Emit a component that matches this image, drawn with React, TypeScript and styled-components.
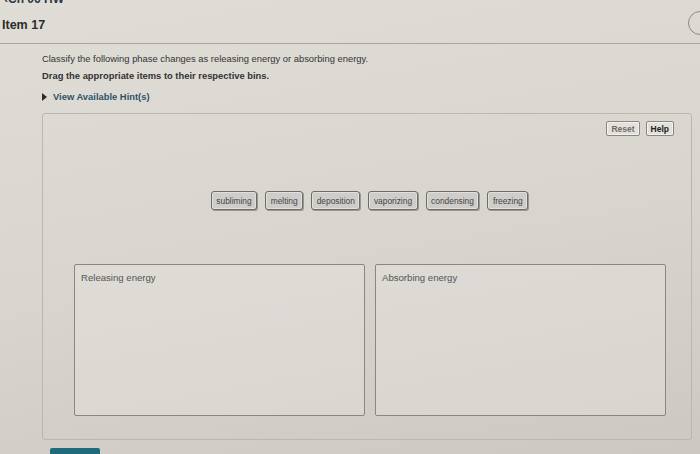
import styled, { createGlobalStyle } from 'styled-components'

const GlobalStyle = createGlobalStyle`
  html, body {
    margin: 0;
    padding: 0;
  }
  body {
    width: 700px;
    height: 454px;
    overflow: hidden;
    font-family: "Liberation Sans", Arial, sans-serif;
    background: linear-gradient(170deg, #e0ddd7 0%, #d8d4ce 55%, #cdc9c2 100%);
    color: #333;
  }
`

const Crumb = styled.div`
  height: 6px;
  overflow: hidden;
  padding-left: 4px;
`

const CrumbText = styled.span`
  display: block;
  transform: translateY(-8px);
  font-size: 12px;
  font-weight: 700;
  color: #2f3a44;
`

const ItemHeader = styled.div`
  display: flex;
  justify-content: space-between;
  align-items: center;
  height: 37px;
  padding-left: 2px;
  border-bottom: 1px solid #aaa69f;
  overflow: hidden;
`

const ItemTitle = styled.h1`
  margin: 0;
  font-size: 12.5px;
  font-weight: 700;
  color: #2c2c2c;
`

const RoundButton = styled.div`
  width: 22px;
  height: 22px;
  border-radius: 50%;
  border: 1px solid #8d8a85;
  margin-right: -12px;
  margin-top: -4px;
`

const Content = styled.div`
  padding: 9px 8px 0 42px;
`

const Line = styled.p<{ $bold?: boolean }>`
  margin: 0 0 6px;
  font-size: 9.4px;
  line-height: 11px;
  font-weight: ${(p) => (p.$bold ? 700 : 400)};
  color: #333;
`

const Hint = styled.div`
  display: flex;
  align-items: center;
  gap: 6px;
  margin: 10px 0 11px;
  font-size: 9.4px;
  font-weight: 700;
  color: #2f5466;
`

const Arrow = styled.span`
  width: 0;
  height: 0;
  border-top: 4px solid transparent;
  border-bottom: 4px solid transparent;
  border-left: 5px solid #2b2b2b;
`

const Panel = styled.div`
  border: 1px solid #bbb7b0;
  border-radius: 3px;
  height: 327px;
  box-sizing: border-box;
  padding: 7px 17px 0 31px;
`

const Toolbar = styled.div`
  display: flex;
  justify-content: flex-end;
  gap: 6px;
`

const ToolButton = styled.button<{ $dim?: boolean }>`
  height: 15px;
  padding: 0 4px;
  font-family: "Liberation Sans", Arial, sans-serif;
  font-size: 8.5px;
  font-weight: 700;
  color: ${(p) => (p.$dim ? '#6d6a66' : '#222')};
  background: #e4e1dc;
  border: 1px solid #8a8782;
  border-radius: 2px;
  box-shadow: inset 0 0 0 1px #f3f1ee;
`

const Tokens = styled.div`
  display: flex;
  justify-content: center;
  gap: 8px;
  margin-top: 55px;
  padding-right: 9px;
`

const Token = styled.div`
  height: 17px;
  padding: 0 4.5px;
  display: flex;
  align-items: center;
  font-size: 8.4px;
  color: #444;
  background: #cfcdca;
  border: 1px solid #6e6c69;
  border-radius: 3px;
  box-shadow: inset 0 0 0 1px #e2e0dd, 1px 1px 0 #9b9893;
`

const Bins = styled.div`
  display: flex;
  gap: 10px;
  margin-top: 54px;
`

const Bin = styled.div`
  width: 291px;
  height: 152px;
  box-sizing: border-box;
  border: 1px solid #8a8782;
  border-radius: 2px;
  padding: 7px 6px;
  font-size: 9.6px;
  color: #555;
  background: rgba(235, 232, 227, 0.35);
`

const Submit = styled.div`
  width: 50px;
  height: 10px;
  margin: 8px 0 0 8px;
  background: #1f6b7b;
  border-radius: 2px 2px 0 0;
`

const tokens = ['subliming', 'melting', 'deposition', 'vaporizing', 'condensing', 'freezing']

export default function App() {
  return (
    <>
      <GlobalStyle />
      <Crumb>
        <CrumbText>‹Ch 06 HW</CrumbText>
      </Crumb>
      <ItemHeader>
        <ItemTitle>Item 17</ItemTitle>
        <RoundButton />
      </ItemHeader>
      <Content>
        <Line>Classify the following phase changes as releasing energy or absorbing energy.</Line>
        <Line $bold>Drag the appropriate items to their respective bins.</Line>
        <Hint>
          <Arrow />
          View Available Hint(s)
        </Hint>
        <Panel>
          <Toolbar>
            <ToolButton $dim>Reset</ToolButton>
            <ToolButton>Help</ToolButton>
          </Toolbar>
          <Tokens>
            {tokens.map((t) => (
              <Token key={t}>{t}</Token>
            ))}
          </Tokens>
          <Bins>
            <Bin>Releasing energy</Bin>
            <Bin>Absorbing energy</Bin>
          </Bins>
        </Panel>
        <Submit />
      </Content>
    </>
  )
}
